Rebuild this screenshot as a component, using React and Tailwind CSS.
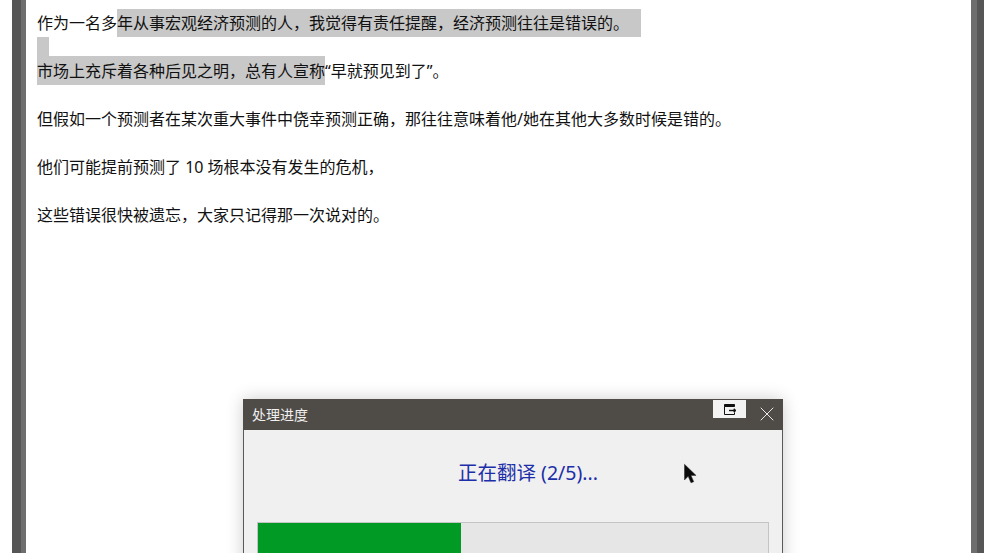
import { X } from "lucide-react";

const lines = [
  "但假如一个预测者在某次重大事件中侥幸预测正确\uFF0C那往往意味着他/她在其他大多数时候是错的。",
  "他们可能提前预测了 10 场根本没有发生的危机\uFF0C",
  "这些错误很快被遗忘\uFF0C大家只记得那一次说对的。",
];

function PopOutIcon() {
  return (
    <svg width="14" height="13" viewBox="0 0 14 13" fill="none" stroke="#111" strokeWidth="1">
      <path d="M1.5 1.5h10v2h-10zM1.5 3.5v8h10v-2" />
      <path d="M1.5 2.5h10" strokeWidth="2" />
      <path d="M6 7.5h6" strokeWidth="1.4" />
      <path d="M11 5.8l2 1.7-2 1.7z" fill="#111" />
    </svg>
  );
}

function ProgressDialog() {
  return (
    <div className="absolute left-[243px] top-[399px] w-[540px] h-[200px] bg-[#f0f0f0] border-x border-[#5a5a5a] shadow-[0_0_16px_rgba(0,0,0,0.2)]">
      <div className="h-[31px] -mx-px bg-[#4f4b47] flex items-start pl-[9px]">
        <span className="text-[14px] leading-[31px] text-[#f0f0f0]">处理进度</span>
        <div className="ml-[405px] w-[33px] h-[18px] mt-px bg-[#f3f3f3] flex items-center justify-center">
          <PopOutIcon />
        </div>
        <X className="ml-[9px] mt-[3px] text-[#e8e8e8]" size={24} strokeWidth={1} />
      </div>
      <div className="h-[92px] flex justify-center pt-[30px] pl-[30px]">
        <span className="text-[19.5px] leading-[26px] text-[#1c2fa8]">正在翻译 (2/5)...</span>
      </div>
      <div className="ml-[13px] mr-[13px] h-[60px] bg-[#e6e6e6] border border-[#c4c4c4]">
        <div className="w-[203px] h-full bg-[#009a25]" />
      </div>
      <svg className="absolute left-[440px] top-[64px]" width="13" height="22" viewBox="0 0 14 22">
        <path d="M0.5 0.5v17l4-4 3 7 3-1.2-3-6.8h5.5z" fill="#0a0a0a" stroke="#222" strokeWidth="0.5" />
      </svg>
    </div>
  );
}

export default function App() {
  return (
    <div className="relative h-[553px] overflow-hidden bg-white flex font-['Noto_Sans','Noto_Sans_CJK_SC',sans-serif]">
      <div className="w-3 shrink-0" />
      <div className="w-[9px] shrink-0 bg-[#565656]" />
      <div className="w-[5px] shrink-0 bg-[#6e6e6e]" />
      <div className="flex-1 pl-[11px] pt-[9px] text-[16px] text-[#111] leading-[28px]">
        <p className="h-[28px] whitespace-nowrap">
          作为一名多
          <span className="inline-block w-[524px] bg-[#c8c8c8]">{"年从事宏观经济预测的人\uFF0C我觉得有责任提醒\uFF0C经济预测往往是错误的。"}</span>
        </p>
        <div className="w-3 h-[19px] bg-[#c8c8c8]" />
        <p className="h-[29px] leading-[30px] whitespace-nowrap">
          <span className="inline-block h-[29px] bg-[#c8c8c8]">{"市场上充斥着各种后见之明\uFF0C总有人宣称"}</span>
          <span>{"\u201C早就预见到了\u201D。"}</span>
        </p>
        <div className="mt-[20px] flex flex-col gap-[20px]">
          {lines.map((line) => (
            <p key={line} className="whitespace-nowrap">{line}</p>
          ))}
        </div>
      </div>
      <div className="w-[6px] shrink-0 bg-[#6e6e6e]" />
      <div className="w-[7px] shrink-0 bg-[#565656]" />
      <ProgressDialog />
    </div>
  );
}
